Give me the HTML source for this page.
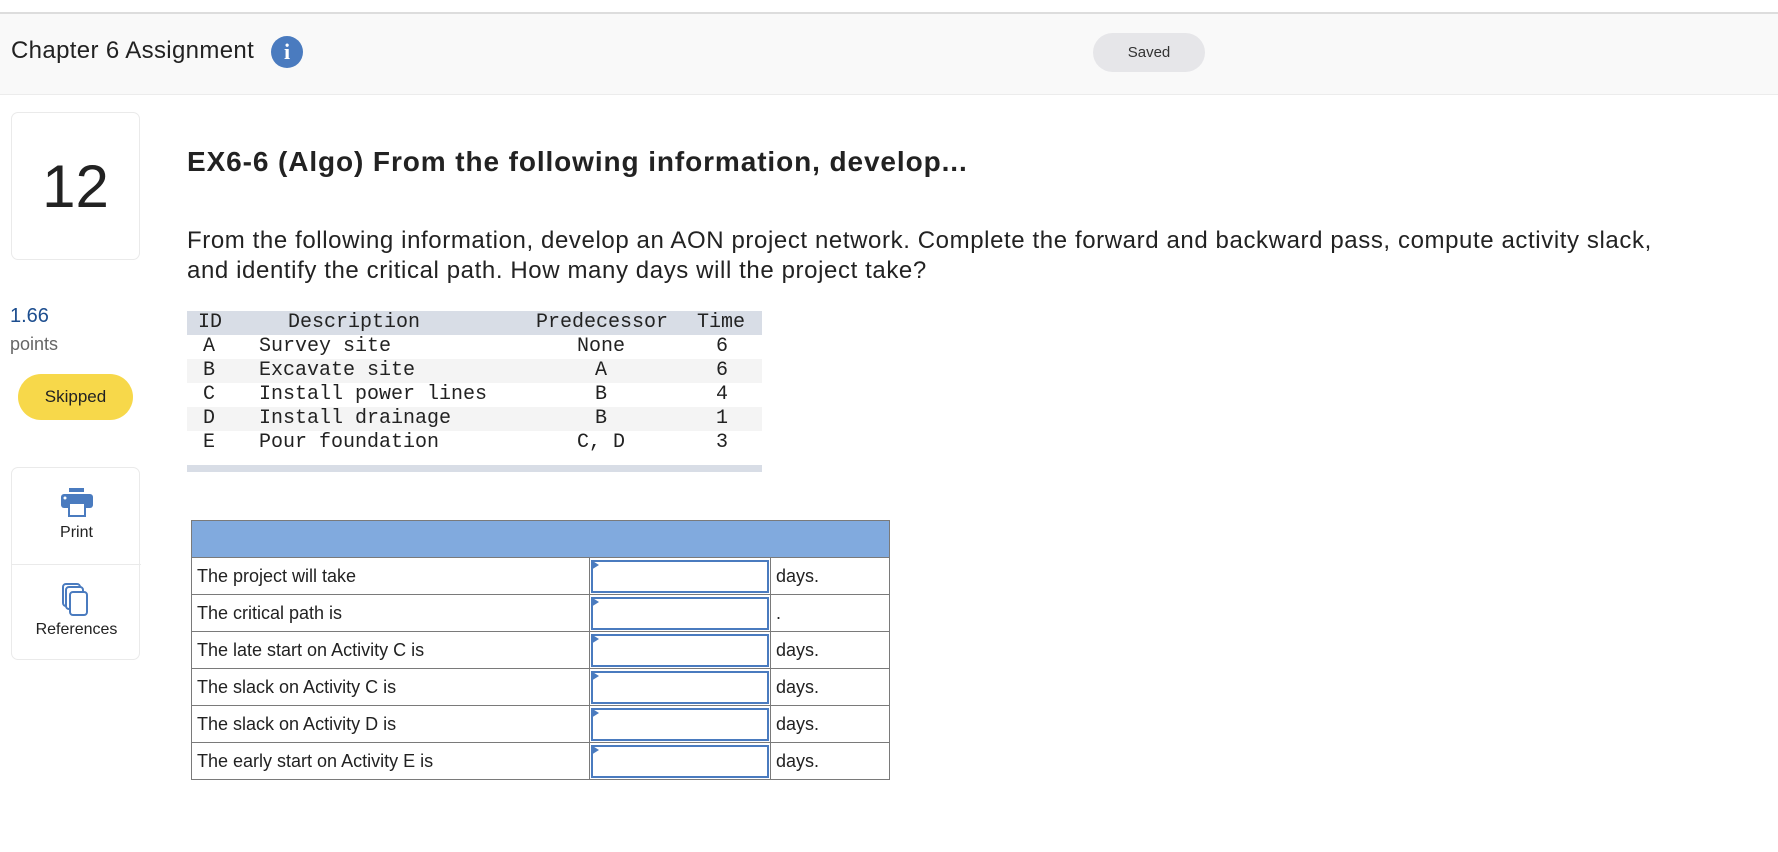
<!DOCTYPE html>
<html><head><meta charset="utf-8"><style>
*{margin:0;padding:0;box-sizing:border-box}
body{width:1778px;height:852px;background:#fff;font-family:"Liberation Sans",Arial,sans-serif;color:#222;position:relative;overflow:hidden}
.abs{position:absolute}
.topline{left:0;top:12px;width:1778px;height:2px;background:#ddd}
.hdr{left:0;top:14px;width:1778px;height:81px;background:#f9f9f9;border-bottom:1px solid #ececec}
.title{left:11px;top:37px;font-size:24px;color:#222;letter-spacing:0.35px}
.info{left:271px;top:36px;width:32px;height:32px;border-radius:50%;background:#4a7bbf;color:#fff;font:bold 22px "Liberation Serif",serif;text-align:center;line-height:32px}
.saved{left:1093px;top:33px;width:112px;height:39px;border-radius:20px;background:#e6e6e9;font-size:15px;text-align:center;line-height:39px;color:#333}
.box{border:1px solid #eaeaea;border-radius:7px;background:#fff}
.num{left:11px;top:112px;width:129px;height:148px;font-size:60px;text-align:center;line-height:148px;color:#222}
.h1{left:187px;top:146px;font-size:28px;font-weight:bold;color:#222;letter-spacing:0.9px}
.p{left:187px;top:226px;font-size:24px;line-height:29.5px;width:1560px;color:#222;letter-spacing:0.6px}
.pts{left:10px;top:305px;font-size:20px;color:#1d4e8f}
.ptsl{left:10px;top:334px;font-size:18px;color:#666}
.skip{left:18px;top:374px;width:115px;height:46px;border-radius:23px;background:#f7d84a;font-size:17px;text-align:center;line-height:46px;color:#222}
.side{left:11px;top:467px;width:129px;height:193px}
.row{position:absolute;left:187px;width:575px;height:24px;font:20px "Liberation Mono",monospace;line-height:24px;color:#222;white-space:pre}
.row span{position:absolute;top:0}
.c1{left:16px}.c2{left:72px}.c3{left:354px;width:120px;text-align:center}.c4{left:510px;width:50px;text-align:center}
.bar{left:187px;top:465px;width:575px;height:7px;background:#d8dde6}
.t2{left:191px;top:520px;border-collapse:collapse;font-size:18px}
.t2 td{border:1.5px solid #7a7a7a;height:37px;padding:0 5px;vertical-align:middle}
.t2 tr.h td{background:#81aade;height:37px}
.inp{position:relative;padding:1px !important}
.inp div{width:100%;height:33px;border:2.5px solid #4a7bbf;background:#fff}
.inp span{position:absolute;left:1px;top:2px;width:0;height:0;border-top:5px solid transparent;border-bottom:5px solid transparent;border-left:8px solid #4a7bbf}
</style></head><body>
<div class="abs topline"></div>
<div class="abs hdr"></div>
<div class="abs title">Chapter 6 Assignment</div>
<div class="abs info">i</div>
<div class="abs saved">Saved</div>

<div class="abs box num">12</div>
<div class="abs h1">EX6-6 (Algo) From the following information, develop...</div>
<div class="abs p">From the following information, develop an AON project network. Complete the forward and backward pass, compute activity slack,<br>and identify the critical path. How many days will the project take?</div>

<div class="abs pts">1.66</div>
<div class="abs ptsl">points</div>
<div class="abs skip">Skipped</div>

<div class="abs box side">
  <svg class="abs" style="left:48px;top:20px" width="34" height="30" viewBox="0 0 34 30">
    <rect x="9" y="0" width="15" height="4" fill="#4a7bbf"/>
    <rect x="1" y="6" width="32" height="14" rx="3" fill="#4a7bbf"/>
    <circle cx="5" cy="10" r="1.5" fill="#fff"/>
    <rect x="9" y="15" width="16" height="13" fill="#fff" stroke="#4a7bbf" stroke-width="2"/>
  </svg>
  <div class="abs" style="left:0;top:56px;width:129px;text-align:center;font-size:16px">Print</div>
  <div class="abs" style="left:0;top:96px;width:129px;height:1px;background:#eaeaea"></div>
  <svg class="abs" style="left:50px;top:115px" width="32" height="36" viewBox="0 0 32 36">
    <rect x="1" y="1" width="17" height="22" rx="3" fill="#fff" stroke="#4a7bbf" stroke-width="2"/>
    <rect x="4" y="4" width="17" height="22" rx="3" fill="#fff" stroke="#4a7bbf" stroke-width="2"/>
    <rect x="8" y="9" width="17" height="23" rx="3" fill="#fff" stroke="#4a7bbf" stroke-width="2"/>
  </svg>
  <div class="abs" style="left:0;top:153px;width:129px;text-align:center;font-size:16px">References</div>
</div>

<div class="row" style="top:311px;background:#d8dde6"><span style="left:11px">ID</span><span style="left:72px;width:190px;text-align:center">Description</span><span class="c3" style="left:340px;width:150px">Predecessor</span><span style="left:510px">Time</span></div>
<div class="row" style="top:335px"><span class="c1">A</span><span class="c2">Survey site</span><span class="c3">None</span><span class="c4">6</span></div>
<div class="row" style="top:359px;background:#f4f4f4"><span class="c1">B</span><span class="c2">Excavate site</span><span class="c3">A</span><span class="c4">6</span></div>
<div class="row" style="top:383px"><span class="c1">C</span><span class="c2">Install power lines</span><span class="c3">B</span><span class="c4">4</span></div>
<div class="row" style="top:407px;background:#f4f4f4"><span class="c1">D</span><span class="c2">Install drainage</span><span class="c3">B</span><span class="c4">1</span></div>
<div class="row" style="top:431px"><span class="c1">E</span><span class="c2">Pour foundation</span><span class="c3">C, D</span><span class="c4">3</span></div>
<div class="abs bar"></div>

<table class="abs t2">
<tr class="h"><td colspan="3" style="width:698px"></td></tr>
<tr><td style="width:398px">The project will take</td><td class="inp" style="width:181px"><div></div><span></span></td><td style="width:119px">days.</td></tr>
<tr><td>The critical path is</td><td class="inp"><div></div><span></span></td><td>.</td></tr>
<tr><td>The late start on Activity C is</td><td class="inp"><div></div><span></span></td><td>days.</td></tr>
<tr><td>The slack on Activity C is</td><td class="inp"><div></div><span></span></td><td>days.</td></tr>
<tr><td>The slack on Activity D is</td><td class="inp"><div></div><span></span></td><td>days.</td></tr>
<tr><td>The early start on Activity E is</td><td class="inp"><div></div><span></span></td><td>days.</td></tr>
</table>
</body></html>
